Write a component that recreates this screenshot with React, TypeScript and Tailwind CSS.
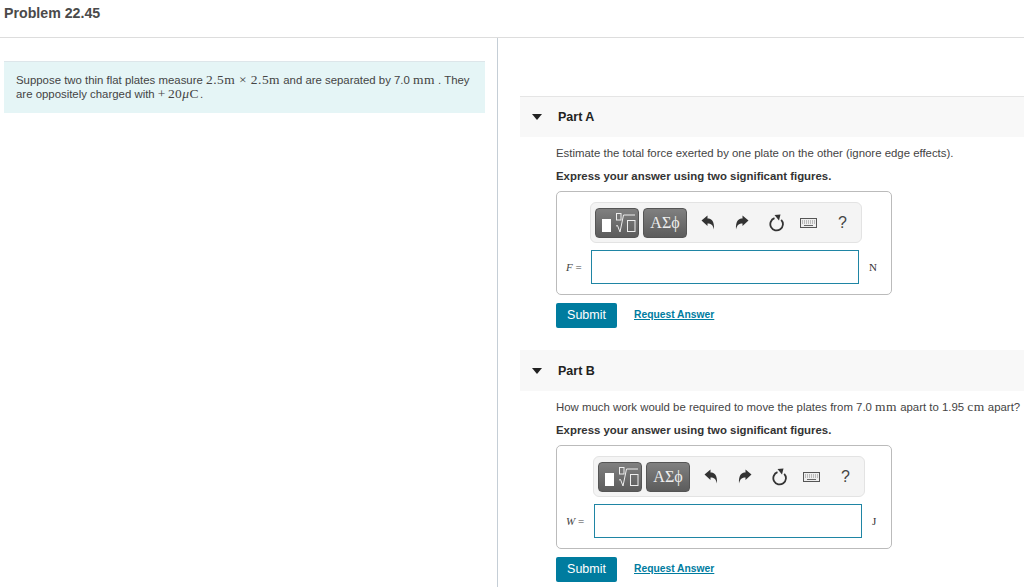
const sans = "font-['Liberation_Sans',Arial,sans-serif]";

function M({ children }: { children: React.ReactNode }) {
  return <span className="font-['Liberation_Serif',serif] text-[13.5px] tracking-[0.45px] text-[#444]">{children}</span>;
}

function Templates() {
  return (
    <button type="button" className="flex h-[30px] w-[44px] items-center rounded-[4px] border border-[#555] bg-gradient-to-b from-[#808080] to-[#5c5c5c] pl-[6px]">
      <svg width="34" height="24" viewBox="0 0 34 24" fill="none">
        <rect x="0" y="8" width="9" height="13" fill="#fff" />
        <rect x="14.5" y="2.5" width="4.5" height="6.5" stroke="#eee" strokeWidth="1" />
        <path d="M14 15l1.5-.5 2.5 6.5 3.5-17h11.5" stroke="#eee" strokeWidth="1" />
        <rect x="25.5" y="9.5" width="7.5" height="11" stroke="#eee" strokeWidth="1" />
      </svg>
    </button>
  );
}

function Symbols() {
  return (
    <button type="button" className="flex h-[30px] w-[44px] items-center justify-center rounded-[4px] border border-[#555] bg-gradient-to-b from-[#808080] to-[#5c5c5c] font-['Liberation_Serif',serif] text-[16px] text-[#eee]">
      ΑΣϕ
    </button>
  );
}

function Toolbar() {
  return (
    <div className="flex h-[41px] w-[272px] items-center rounded-[6px] border border-[#e3e3e3] bg-[#f4f4f4] pl-[4px]">
      <Templates />
      <div className="ml-[4px]"><Symbols /></div>
      <svg className="ml-[14px]" width="14" height="15" viewBox="0 0 14 15">
        <path d="M0.5 5.5L6.5 0.5V3.5C10.5 3.5 13.5 6 13 14.5C12 10 10 8.5 6.5 8.5V11Z" fill="#333" />
      </svg>
      <svg className="ml-[20px]" width="14" height="15" viewBox="0 0 14 15">
        <path d="M13.5 5.5L7.5 0.5V3.5C3.5 3.5 0.5 6 1 14.5C2 10 4 8.5 7.5 8.5V11Z" fill="#333" />
      </svg>
      <svg className="ml-[19px]" width="16" height="18" viewBox="0 0 16 18" fill="none">
        <path d="M6.5 4.2A6.3 6.3 0 1 0 13.2 5.8" stroke="#333" strokeWidth="1.8" />
        <path d="M6.5 1L12.5 0.5L11 6.5Z" fill="#333" />
      </svg>
      <svg className="ml-[16px]" width="17" height="10" viewBox="0 0 17 10" fill="none">
        <rect x="0.5" y="0.5" width="16" height="9" fill="#eee" stroke="#555" />
        <path d="M2 3h13M2 5h13" stroke="#888" strokeWidth="1" strokeDasharray="1 1" />
        <path d="M4 7.5h9" stroke="#666" />
      </svg>
      <span className={`ml-[21px] ${sans} text-[16px] text-[#444]`}>?</span>
    </div>
  );
}

function Part({ title, question, label, unit, labelWidth, shift, barBorder }: { title: string; question: React.ReactNode; label: string; unit: string; labelWidth: string; shift: string; barBorder: string }) {
  return (
    <section>
      <div className={`flex h-[41px] items-center border-t bg-[#f8f8f8] ${barBorder}`}>
        <svg className="ml-[12px]" width="10" height="6" viewBox="0 0 10 6"><path d="M0 0h10L5 6Z" fill="#222" /></svg>
        <h2 className="ml-[16px] pt-[1px] text-[12.5px] font-bold text-[#222]">{title}</h2>
      </div>
      <div className="pl-[36px]">
        <p className="mt-[8px] whitespace-nowrap text-[11.4px] leading-[16px] text-[#444]">{question}</p>
        <p className="mt-[7px] text-[11.4px] font-bold leading-[16px] text-[#333]">Express your answer using two significant figures.</p>
        <div className="mt-[7px] h-[104px] w-[336px] rounded-[5px] border border-[#bbb] pt-[10px]">
          <div className={shift}><Toolbar /></div>
          <div className="mt-[7px] flex items-center">
            <span className={`${labelWidth} shrink-0 whitespace-nowrap pl-[9px] font-['Liberation_Serif',serif] text-[11px] text-[#444]`}><i>{label}</i> =</span>
            <div className="h-[34px] w-[268px] shrink-0 border border-[#1f85a4] bg-white" />
            <span className="ml-[10px] font-['Liberation_Serif',serif] text-[11px] text-[#333]">{unit}</span>
          </div>
        </div>
        <div className="mt-[8px] flex items-center">
          <button type="button" className="h-[25px] w-[61px] rounded-[2px] bg-[#007c9f] text-[12.5px] text-white">Submit</button>
          <a href="#" className="mb-[1px] ml-[17px] text-[10.3px] font-bold text-[#007c9f] underline">Request Answer</a>
        </div>
      </div>
    </section>
  );
}

export default function App() {
  return (
    <div className={`h-[587px] w-[1024px] overflow-hidden bg-white ${sans}`}>
      <header className="flex h-[38px] items-start border-b border-[#ddd] pl-[4px] pt-[5px]">
        <h1 className="text-[14.2px] font-bold leading-[16px] text-[#4a4a4a]">Problem 22.45</h1>
      </header>
      <div className="flex h-[549px]">
        <div className="w-[498px] shrink-0 border-r border-[#c5ced6] pl-[4px] pt-[23px]">
          <div className="h-[52px] w-[481px] border-t border-[#dde6ea] bg-[#e5f5f6] pl-[12px] pt-[11px] text-[11.4px] leading-[14px] text-[#444]">
            <p className="whitespace-nowrap">Suppose two thin flat plates measure <M>2.5m × 2.5m</M> and are separated by 7.0 <M>mm</M> . They</p>
            <p>are oppositely charged with <M>+<span className="ml-[2px]">20</span><i>μ</i><span className="mr-[1px]">C</span></M>.</p>
          </div>
        </div>
        <main className="flex-1 pl-[22px] pt-[58px]">
          <Part title="Part A" label="F" unit="N" labelWidth="w-[34px]" shift="ml-[33px]" barBorder="border-[#e5e5e5]" question="Estimate the total force exerted by one plate on the other (ignore edge effects)." />
          <div className="h-[22px]" />
          <Part title="Part B" label="W" unit="J" labelWidth="w-[37px]" shift="ml-[36px]" barBorder="border-transparent" question={<>How much work would be required to move the plates from 7.0 <M>mm</M> apart to 1.95 <M>cm</M> apart?</>} />
        </main>
      </div>
    </div>
  );
}
